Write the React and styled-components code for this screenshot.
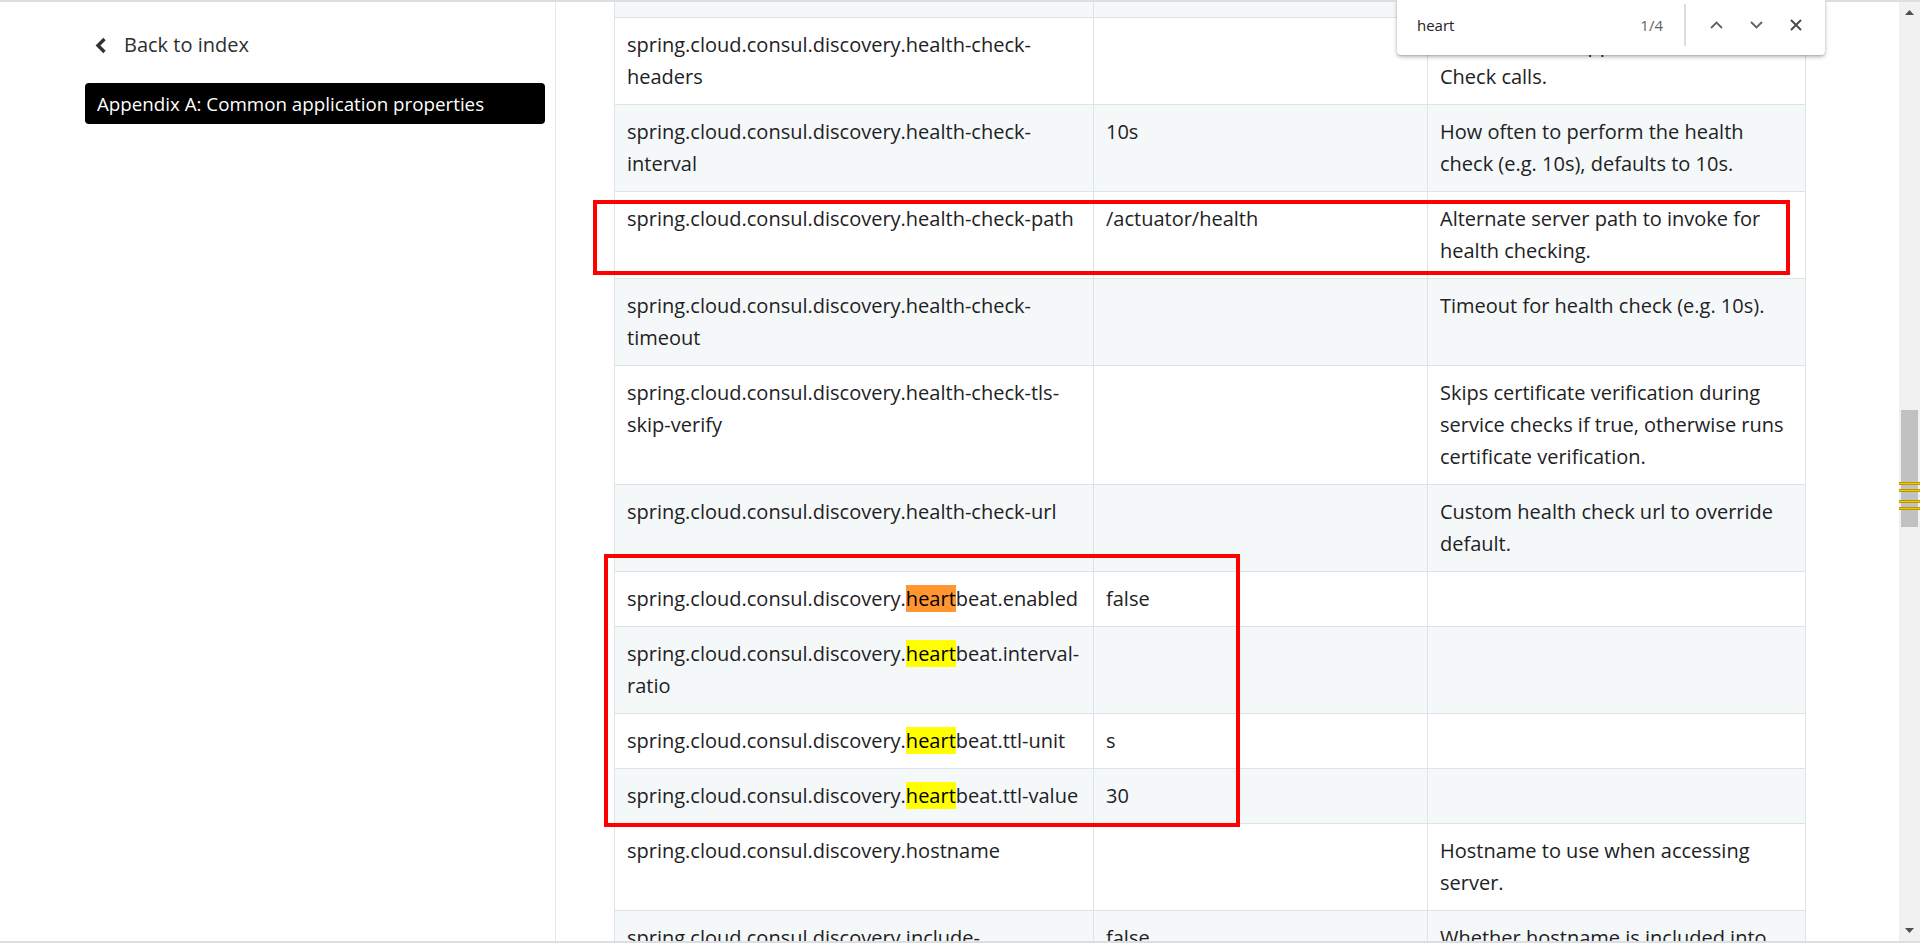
import React from "react";
import styled, { createGlobalStyle } from "styled-components";

const GlobalStyle = createGlobalStyle`
  html, body {
    margin: 0;
    padding: 0;
    overflow: hidden;
  }
  body {
    font-family: "Open Sans", "Liberation Sans", sans-serif;
    color: #1d2224;
    background: #fff;
  }
  * {
    box-sizing: border-box;
  }
`;

const SEARCH = "heart";

const properties = [
  { name: "spring.cloud.consul.discovery.health-check-critical-timeout", def: "", desc: "" },
  { name: "spring.cloud.consul.discovery.health-check-headers", def: "", desc: "Headers to be applied to the Health Check calls." },
  { name: "spring.cloud.consul.discovery.health-check-interval", def: "10s", desc: "How often to perform the health check (e.g. 10s), defaults to 10s." },
  { name: "spring.cloud.consul.discovery.health-check-path", def: "/actuator/health", desc: "Alternate server path to invoke for health checking." },
  { name: "spring.cloud.consul.discovery.health-check-timeout", def: "", desc: "Timeout for health check (e.g. 10s)." },
  { name: "spring.cloud.consul.discovery.health-check-tls-skip-verify", def: "", desc: "Skips certificate verification during service checks if true, otherwise runs certificate verification." },
  { name: "spring.cloud.consul.discovery.health-check-url", def: "", desc: "Custom health check url to override default." },
  { name: "spring.cloud.consul.discovery.heartbeat.enabled", def: "false", desc: "" },
  { name: "spring.cloud.consul.discovery.heartbeat.interval-ratio", def: "", desc: "" },
  { name: "spring.cloud.consul.discovery.heartbeat.ttl-unit", def: "s", desc: "" },
  { name: "spring.cloud.consul.discovery.heartbeat.ttl-value", def: "30", desc: "" },
  { name: "spring.cloud.consul.discovery.hostname", def: "", desc: "Hostname to use when accessing server." },
  { name: "spring.cloud.consul.discovery.include-hostname-in-instance-id", def: "false", desc: "Whether hostname is included into the default instance id when registering service." },
];

// annotation rectangles drawn over the table (relative to the content pane)
const annotations = [
  { left: 37, top: 198, width: 1197, height: 75 },
  { left: 48, top: 552, width: 636, height: 273 },
];

const App = () => {
  let matchIndex = 0;

  const highlight = (text) => {
    const parts = text.split(SEARCH);
    if (parts.length === 1) return text;
    return parts.map((part, i) => {
      if (i === 0) return part;
      const current = matchIndex === 0;
      matchIndex += 1;
      return (
        <React.Fragment key={i}>
          <Mark $current={current}>{SEARCH}</Mark>
          {part}
        </React.Fragment>
      );
    });
  };

  return (
    <>
      <GlobalStyle />
      <Frame>
        <Edge />
        <Viewport>
          <Sidebar>
            <BackLink>
              <BackIcon />
              Back to index
            </BackLink>
            <NavItem>Appendix A: Common application properties</NavItem>
          </Sidebar>

          <Main>
            <Table>
              <colgroup>
                <col style={{ width: 479 }} />
                <col style={{ width: 334 }} />
                <col style={{ width: 378 }} />
              </colgroup>
              <tbody>
                {properties.map((p, i) => (
                  <Row key={p.name} $striped={i % 2 === 0}>
                    <NameCell>{highlight(p.name)}</NameCell>
                    <Cell>{p.def}</Cell>
                    <Cell>{p.desc}</Cell>
                  </Row>
                ))}
              </tbody>
            </Table>

            {annotations.map((a, i) => (
              <Annotation key={i} style={a} />
            ))}
          </Main>

          <Scrollbar>
            <ScrollArrow>
              <svg width="9" height="5" viewBox="0 0 9 5">
                <path d="M0 5 L4.5 0 L9 5 Z" fill="#505050" />
              </svg>
            </ScrollArrow>
            <Track>
              <Thumb />
              {[459, 466, 477, 484].map((top) => (
                <MatchMarker key={top} style={{ top }} />
              ))}
            </Track>
            <ScrollArrow>
              <svg width="9" height="5" viewBox="0 0 9 5">
                <path d="M0 0 L9 0 L4.5 5 Z" fill="#505050" />
              </svg>
            </ScrollArrow>
          </Scrollbar>
        </Viewport>
        <Edge />

        <FindBar>
          <FindInput>heart</FindInput>
          <FindCount>1/4</FindCount>
          <FindDivider />
          <FindButton>
            <svg width="13" height="8" viewBox="0 0 13 8">
              <path d="M1 7 L6.5 1.5 L12 7" fill="none" stroke="#5f6368" strokeWidth="1.8" />
            </svg>
          </FindButton>
          <FindButton>
            <svg width="13" height="8" viewBox="0 0 13 8">
              <path d="M1 1 L6.5 6.5 L12 1" fill="none" stroke="#5f6368" strokeWidth="1.8" />
            </svg>
          </FindButton>
          <FindButton>
            <svg width="12" height="12" viewBox="0 0 12 12">
              <path d="M1 1 L11 11 M11 1 L1 11" fill="none" stroke="#4a4a4a" strokeWidth="1.9" />
            </svg>
          </FindButton>
        </FindBar>
      </Frame>
    </>
  );
};

const BackIcon = () => (
  <svg width="13" height="17" viewBox="0 0 13 17">
    <path d="M10.5 2 L4 8.5 L10.5 15" fill="none" stroke="#333" strokeWidth="3.4" />
  </svg>
);

const Frame = styled.div`
  position: relative;
  width: 1920px;
  height: 943px;
  display: flex;
  flex-direction: column;
`;

const Edge = styled.div`
  height: 2px;
  flex: none;
  background: #dcdee1;
`;

const Viewport = styled.div`
  flex: 1;
  min-height: 0;
  display: flex;
`;

const Sidebar = styled.aside`
  width: 556px;
  flex: none;
  border-right: 1px solid #e3e8ea;
  padding-top: 27px;
  display: flex;
  flex-direction: column;
  align-items: flex-start;
`;

const BackLink = styled.a`
  display: flex;
  align-items: center;
  gap: 17px;
  margin-left: 94px;
  font-size: 20px;
  line-height: 32px;
  color: #2b2f31;
  cursor: pointer;
`;

const NavItem = styled.div`
  margin: 22px 0 0 85px;
  width: 460px;
  padding: 5.5px 12px;
  background: #000;
  color: #fff;
  border-radius: 4px;
  font-size: 18.75px;
  line-height: 30px;
`;

const Main = styled.main`
  position: relative;
  flex: 1;
  min-width: 0;
  overflow: hidden;
`;

const Table = styled.table`
  margin: -72px 0 0 58px;
  width: 1191px;
  border-collapse: collapse;
  table-layout: fixed;
  font-size: 20px;
  line-height: 32px;
`;

const Row = styled.tr`
  background: ${({ $striped }) => ($striped ? "#f5f8f9" : "#fff")};
`;

const Cell = styled.td`
  border: 1px solid #dce4e6;
  padding: 11px 12px;
  vertical-align: top;
  color: #1d2224;
`;

const NameCell = styled(Cell)`
  padding-right: 14px;
`;

const Mark = styled.span`
  background: ${({ $current }) => ($current ? "#ff9632" : "#ffff00")};
  color: #000;
`;

const Annotation = styled.div`
  position: absolute;
  border: 4px solid #ff0000;
  pointer-events: none;
`;

const Scrollbar = styled.div`
  width: 21px;
  flex: none;
  background: #f1f1f1;
  display: flex;
  flex-direction: column;
`;

const ScrollArrow = styled.div`
  height: 21px;
  flex: none;
  display: flex;
  align-items: center;
  justify-content: center;
`;

const Track = styled.div`
  position: relative;
  flex: 1;
`;

const Thumb = styled.div`
  margin: 387px 2px 0;
  height: 117px;
  background: #c1c1c1;
`;

const MatchMarker = styled.div`
  position: absolute;
  left: 0;
  right: 0;
  height: 3px;
  background: #f0c800;
  border-top: 1px solid #b89a00;
  border-bottom: 1px solid #b89a00;
`;

const FindBar = styled.div`
  position: absolute;
  top: 0;
  left: 1397px;
  width: 428px;
  height: 55px;
  padding: 0 9px 5px 20px;
  display: flex;
  align-items: center;
  background: #fff;
  border-radius: 0 0 4px 4px;
  box-shadow: 0 2px 4px rgba(0, 0, 0, 0.25), 0 1px 2px rgba(0, 0, 0, 0.15);
  font-family: "Open Sans", "Liberation Sans", sans-serif;
  font-size: 15px;
`;

const FindInput = styled.div`
  flex: 1;
  color: #202124;
`;

const FindCount = styled.div`
  color: #5f6368;
  margin-right: 21px;
`;

const FindDivider = styled.div`
  align-self: stretch;
  width: 2px;
  margin: 4px 10px 4px 0;
  background: #dadce0;
`;

const FindButton = styled.button`
  width: 40px;
  height: 32px;
  display: flex;
  align-items: center;
  justify-content: center;
  border: none;
  background: transparent;
  padding: 0;
  cursor: pointer;
`;

export default App;
